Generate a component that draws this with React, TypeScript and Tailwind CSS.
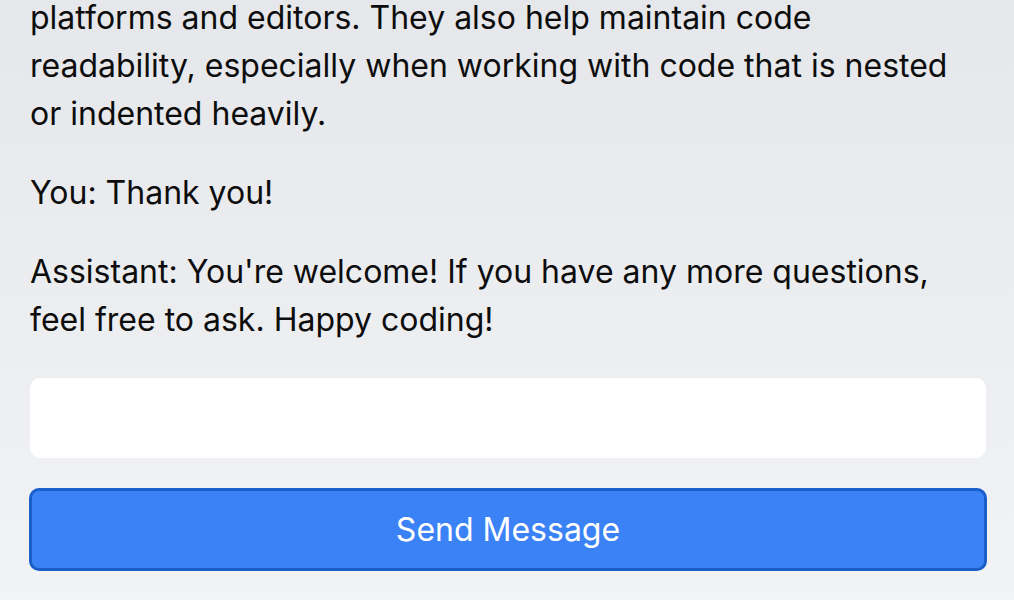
import { useState } from 'react';

export default function App() {
  const [message, setMessage] = useState('');

  return (
    <div
      className="h-screen overflow-hidden bg-gradient-to-b from-[#e5e7ea] to-[#f2f3f5] pl-[30px] pr-[28px] text-[#0d0d0d]"
      style={{ fontFamily: 'Inter, "Noto Sans", sans-serif' }}
    >
      <div className="flex flex-col mt-[-6px]">
        <div className="flex flex-col gap-[31px] text-[32px] leading-[48px]">
          <p>
            platforms and editors. They also help maintain code
            <br />
            readability, especially when working with code that is nested
            <br />
            or indented heavily.
          </p>
          <p>You: Thank you!</p>
          <p>
            Assistant: You're welcome! If you have any more questions,
            <br />
            feel free to ask. Happy coding!
          </p>
        </div>
        <input
          value={message}
          onChange={e => setMessage(e.target.value)}
          className="mt-[34px] h-[80px] w-full rounded-[10px] bg-white px-5 text-[30px] outline-none"
        />
        <button className="mt-[30px] -mx-px h-[83px] rounded-[10px] border-[3px] border-[#1a5fc8] bg-[#3b82f6] text-[32px] text-white">
          Send Message
        </button>
      </div>
    </div>
  );
}
